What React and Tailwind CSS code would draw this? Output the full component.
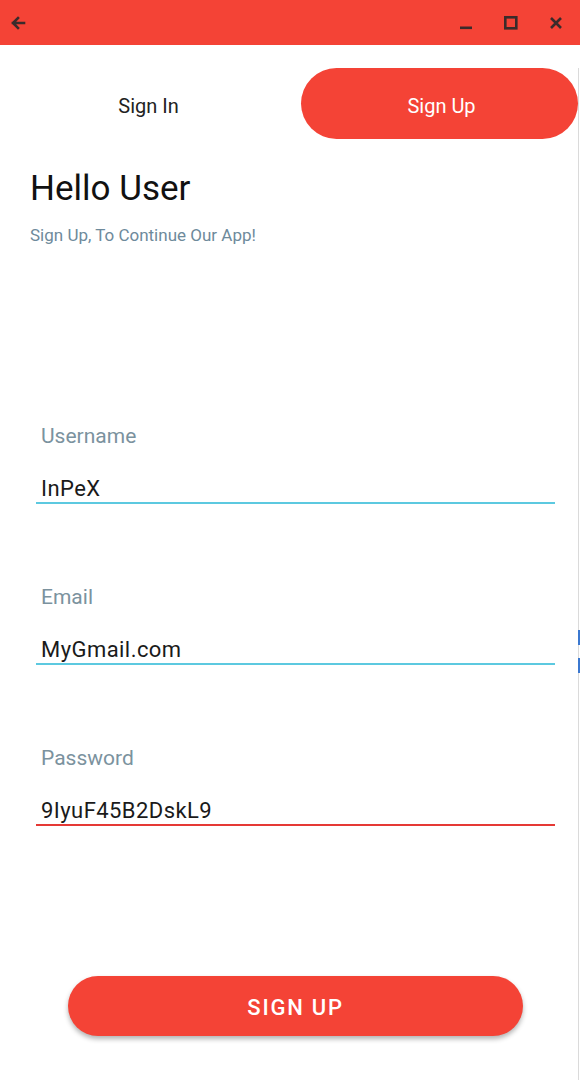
import React from "react";

function Field({ label, value, lineClass }) {
  return (
    <div className="ml-[36px] w-[519px]">
      <div className="pl-[5px] text-[21px] leading-[28px] text-[#7b929e]">{label}</div>
      <div className={`mt-[26px] pl-[5px] text-[22px] leading-[26px] tracking-[0.02em] text-[#1a1a1a] border-b-2 ${lineClass}`}>
        {value}
      </div>
    </div>
  );
}

export default function App() {
  return (
    <div className="relative w-[580px] h-[1080px] bg-white overflow-hidden" style={{ fontFamily: "Roboto, 'Liberation Sans', sans-serif" }}>
      {/* Title bar */}
      <div className="h-[45px] bg-[#f44336] flex items-center justify-between">
        <svg width="16" height="14" viewBox="0 0 16 14" className="ml-[10px] mt-[1px]">
          <path d="M14 7H3M8 2L3 7l5 5" fill="none" stroke="#3a2b2b" strokeWidth="2.6" strokeLinecap="square" />
        </svg>
        <div className="flex items-center mr-[17px]">
          <svg width="16" height="16" viewBox="0 0 16 16" className="mt-[1px]">
            <rect x="2" y="11.5" width="12" height="2.6" fill="#3a2b2b" />
          </svg>
          <svg width="16" height="16" viewBox="0 0 16 16" className="ml-[29px] mt-[1px]">
            <rect x="2.3" y="2.3" width="11" height="11" fill="none" stroke="#3a2b2b" strokeWidth="2.6" />
          </svg>
          <svg width="14" height="14" viewBox="0 0 14 14" className="ml-[30px] mt-[1px]">
            <path d="M2 2l10 10M12 2L2 12" fill="none" stroke="#3a2b2b" strokeWidth="2.6" />
          </svg>
        </div>
      </div>

      <div className="w-[579px] border-r border-[#dadada] h-[1035px]">
        {/* Tabs */}
        <div className="mt-[23px] h-[71px] flex">
          <div className="w-[301px] flex items-center justify-center pt-[4px] pr-[4px] text-[20px] text-[#222]">Sign In</div>
          <div className="flex-1 rounded-full bg-[#f44336] flex items-center justify-center pt-[4px] pl-[4px] text-[20px] text-white">Sign Up</div>
        </div>

        {/* Heading */}
        <div className="ml-[30px] mt-[30px] text-[35px] leading-[40px] text-[#111]">Hello User</div>
        <div className="ml-[30px] mt-[16px] text-[17px] leading-[20px] text-[#6e8a9b]">Sign Up, To Continue Our App!</div>

        {/* Fields */}
        <div className="mt-[177px] flex flex-col gap-[79px]">
          <Field label="Username" value="InPeX" lineClass="border-[#5cc9e0]" />
          <Field label="Email" value="MyGmail.com" lineClass="border-[#5cc9e0]" />
          <Field label="Password" value="9IyuF45B2DskL9" lineClass="border-[#e53935]" />
        </div>

        {/* Button */}
        <button className="mt-[150px] ml-[68px] w-[455px] h-[60px] pt-[2px] rounded-full bg-[#f44336] text-white text-[22px] font-medium tracking-[0.08em] shadow-[0_3px_5px_rgba(0,0,0,0.3)]">
          SIGN UP
        </button>
      </div>

      {/* edge markers */}
      <div className="absolute left-[578px] top-[630px] w-[2px] h-[15px] bg-[#3b78d0]" />
      <div className="absolute left-[578px] top-[658px] w-[2px] h-[15px] bg-[#3b78d0]" />
    </div>
  );
}
